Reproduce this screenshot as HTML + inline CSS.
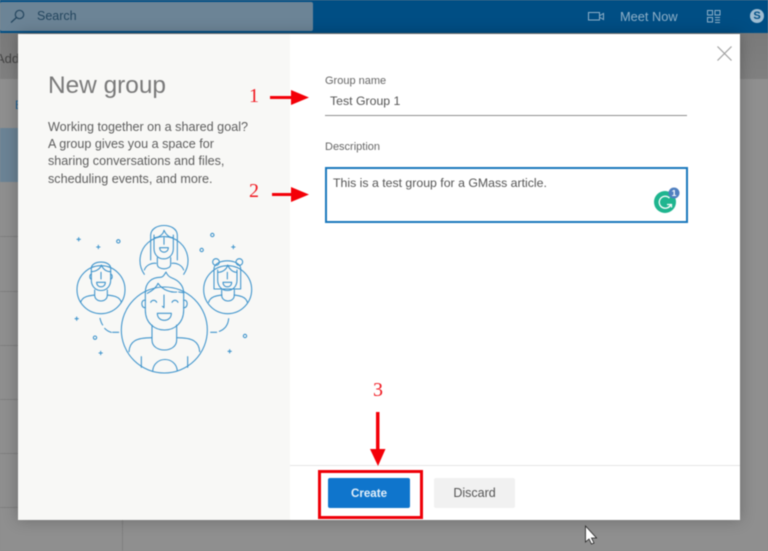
<!DOCTYPE html>
<html lang="en"><head><meta charset="utf-8"><title>New group</title>
<style>
html,body{margin:0;padding:0;width:768px;height:551px;overflow:hidden;background:#8e8e8e}
*{box-sizing:border-box}
body{position:relative;font-family:"Liberation Sans",sans-serif;color:#555}
#w{position:absolute;left:0;top:0;width:768px;height:551px;overflow:hidden;filter:blur(.4px)}
.a{position:absolute;white-space:nowrap}
</style></head><body><div id="w">
<!-- background -->
<div class="a" style="left:0;top:0;width:768px;height:33px;background:#004e84"></div>
<div class="a" style="left:0;top:33px;width:768px;height:46px;background:linear-gradient(#7a7a7a,#808080)"></div>
<div class="a" style="left:0;top:79px;width:768px;height:472px;background:#8f8f8f"></div>
<div class="a" style="left:0;top:128px;width:18px;height:54px;background:#6b8395"></div>
<div class="a" style="left:0;top:236px;width:18px;height:1px;background:#7f7f7f"></div>
<div class="a" style="left:0;top:291px;width:18px;height:1px;background:#7f7f7f"></div>
<div class="a" style="left:0;top:345px;width:18px;height:1px;background:#7f7f7f"></div>
<div class="a" style="left:0;top:399px;width:18px;height:1px;background:#7f7f7f"></div>
<div class="a" style="left:0;top:453px;width:18px;height:1px;background:#7f7f7f"></div>
<div class="a" style="left:0;top:507px;width:18px;height:1px;background:#7f7f7f"></div>
<div class="a" style="left:122px;top:520px;width:1px;height:31px;background:#7f7f7f"></div>
<div class="a" style="left:-4px;top:51px;font-size:13px;color:#444">Add</div>
<div class="a" style="left:15px;top:98px;font-size:12px;color:#1f5f8f">E</div>
<!-- search -->
<div class="a" style="left:0;top:2px;width:313px;height:29px;background:#6c8496;border-radius:2px"></div>
<div class="a" style="left:37px;top:9px;font-size:12.500px;color:#24465f">Search</div>
<svg class="a" style="left:8px;top:7px" width="20" height="20" viewBox="0 0 20 20" fill="none" stroke="#24465f" stroke-width="1.200"><circle cx="11.500" cy="7.500" r="4.200"/><path d="M8.500 10.500L3 15.500"/></svg>
<!-- right header -->
<svg class="a" style="left:587px;top:9px" width="20" height="14" viewBox="0 0 20 14" fill="none" stroke="#8fb0c8" stroke-width="1"><rect x="1.500" y="3.500" width="11" height="7.500"/><path d="M13 6.500l3.500-2v6l-3.500-2"/></svg>
<div class="a" style="left:620px;top:9px;font-size:12.800px;color:#8fb0c8">Meet Now</div>
<svg class="a" style="left:706px;top:9px" width="16" height="15" viewBox="0 0 16 15" fill="none" stroke="#8fb0c8" stroke-width="1"><rect x="1.500" y="1.500" width="5" height="4.500"/><rect x="9" y="1.500" width="5" height="4.500"/><rect x="1.500" y="8.500" width="5" height="4.500"/><path d="M9 8.500h5M9 11h5M9 13.500h5"/></svg>
<div class="a" style="left:750px;top:9px;width:14px;height:14px;border-radius:50%;background:#9fbdd2;color:#004e84;font-size:11px;font-weight:bold;line-height:14px;text-align:center">S</div>
<!-- modal shadow and modal -->
<div class="a" style="left:18px;top:34px;width:722px;height:486px;background:#fff;box-shadow:0 0 14px rgba(0,0,0,.25)"></div>
<div class="a" style="left:18px;top:34px;width:272px;height:486px;background:#f8f8f6"></div>
<div class="a" style="left:290px;top:465px;width:450px;height:1px;background:#e6e6e6"></div>
<!-- left text -->
<div class="a" style="left:48px;top:70px;font-size:24.400px;line-height:32px;color:#7a7a7a">New group</div>
<div class="a" style="left:48px;top:119px;font-size:12.600px;line-height:17.200px;color:#5e5e5e">Working together on a shared goal?<br>A group gives you a space for<br>sharing conversations and files,<br>scheduling events, and more.</div>
<!-- illustration -->
<svg class="a" style="left:60px;top:215px" width="200" height="165" viewBox="0 0 600 495" fill="none" stroke="#3f94cc" stroke-width="3.200" stroke-linecap="round" stroke-linejoin="round">
<circle cx="313" cy="345" r="129"/>
<path d="M207 410c2-30 20-42 68-42M419 410c-2-30-20-42-68-42M244 425v32M383 425v32M278 468c4-46 70-46 74 0"/>
<path d="M276 330v45c0 40 74 40 74 0v-45"/>
<path d="M256 232v53c0 80 115 80 115 0v-53"/>
<path d="M256 232c0-30 20-45 45-45c8 0 12-8 17-16c3 8 8 14 18 18c22 8 35 25 35 45"/>
<path d="M262 235c15-8 28-18 32-30c15 22 40 28 56 26M356 231l14 2"/>
<path d="M256 256c-14-4-14 24 0 22M371 256c14-4 14 24 0 22"/>
<path d="M272 262c4-8 14-8 18 0M336 262c4-8 14-8 18 0M312 240v38l-5-4"/>
<path d="M292 295h42c0 28-42 28-42 0z"/>
<circle cx="123" cy="224" r="72"/>
<path d="M62 262c5-18 25-20 42-22M184 262c-5-18-25-20-42-22M104 225v15c0 24 38 24 38 0v-15"/>
<path d="M94 160v35c0 42 58 42 58 0v-35c0-25-58-25-58 0z"/>
<path d="M94 170c15 0 28-10 30-20c5 12 15 20 28 20M123 172v20M110 202h26c0 18-26 18-26 0zM94 178c-6 0-6 14 0 14M152 178c6 0 6 14 0 14"/>
<path d="M253 178a72 72 0 1 1 118 0"/>
<path d="M253 165c5-15 22-22 35-20M371 165c-5-15-22-22-35-20"/>
<path d="M292 128v20c0 18 40 18 40 0v-20"/>
<path d="M272 135V60c2-38 78-38 80 0v75"/>
<path d="M282 60v40c0 42 58 42 58 0V60M282 68c15 0 28-10 30-22c5 12 15 22 28 22M312 68v20M299 98h26c0 18-26 18-26 0z"/>
<circle cx="503" cy="224" r="72"/>
<path d="M446 262c5-18 25-20 40-22M562 262c-5-18-25-20-40-22M485 225v15c0 24 38 24 38 0v-15"/>
<path d="M462 160v62h80v-62c-4-30-76-30-80 0z"/>
<path d="M473 165v30c0 42 58 42 58 0v-30M473 172c15 0 28-10 30-22c5 12 15 22 28 22M502 172v20M489 202h26c0 18-26 18-26 0z"/>
<circle cx="468" cy="141" r="10"/><circle cx="538" cy="141" r="10"/>
<path d="M120 310c2 8 4 14 8 20M134 340c6 6 12 10 20 12M158 352h18M452 352h18M478 349c16-6 26-18 28-38"/>
<path d="M56 68v10M51 73h10M115 91v10M110 96h10M520 91v10M515 96h10M50 306v10M45 311h10M122 409v10M117 414h10M509 404v10M504 409h10"/>
<circle cx="175" cy="79" r="5"/><circle cx="457" cy="60" r="5"/><circle cx="425" cy="105" r="5"/><circle cx="105" cy="368" r="5"/><circle cx="555" cy="363" r="5"/>
</svg>
<!-- close -->
<svg class="a" style="left:717px;top:46px" width="15" height="15" viewBox="0 0 15 15" fill="none" stroke="#a0a0a0" stroke-width="1.200"><path d="M.5.5l14 14M14.500.5l-14 14"/></svg>
<!-- form -->
<div class="a" style="left:325px;top:75px;font-size:11px;line-height:13px;color:#666">Group name</div>
<div class="a" style="left:330px;top:94px;font-size:12.300px;line-height:15px;color:#555">Test Group 1</div>
<div class="a" style="left:325px;top:115px;width:362px;height:1px;background:#8f8f8f"></div>
<div class="a" style="left:325px;top:141px;font-size:11px;line-height:13px;color:#666">Description</div>
<div class="a" style="left:325px;top:167px;width:363px;height:56px;border:2px solid #1a78bd"></div>
<div class="a" style="left:333px;top:176px;font-size:12.300px;line-height:15px;color:#555">This is a test group for a GMass article.</div>
<!-- grammarly -->
<svg class="a" style="left:652px;top:186px" width="28" height="28" viewBox="0 0 28 28" fill="none"><circle cx="13" cy="16" r="11" fill="#1fb58f"/><path d="M17.500 12a6 6 0 1 0 1.500 6" stroke="#fff" stroke-width="1.300"/><path d="M15 18.500h4.500v3" stroke="#fff" stroke-width="1.200"/><circle cx="22" cy="7" r="5.500" fill="#4f7fc0"/><text x="22" y="10" font-size="8.500" font-weight="bold" fill="#fff" text-anchor="middle" font-family="Liberation Sans">1</text></svg>
<!-- buttons -->
<div class="a" style="left:328px;top:478px;width:82px;height:30px;background:#0f75cc;border-radius:2px;color:#e4f0fa;font-size:11.600px;font-weight:bold;line-height:31px;text-align:center">Create</div>
<div class="a" style="left:434px;top:478px;width:81px;height:30px;background:#f1f1f1;border-radius:2px;color:#555;font-size:12.500px;line-height:30px;text-align:center">Discard</div>
<div class="a" style="left:318px;top:470px;width:105px;height:49px;border:3.500px solid #ee0008"></div>
<!-- annotations -->
<div class="a" style="left:249px;top:84px;font-family:'Liberation Serif',serif;font-size:20px;line-height:24px;color:#f01a22">1</div>
<div class="a" style="left:249px;top:179px;font-family:'Liberation Serif',serif;font-size:20px;line-height:24px;color:#f01a22">2</div>
<div class="a" style="left:373px;top:378px;font-family:'Liberation Serif',serif;font-size:20px;line-height:24px;color:#f01a22">3</div>
<svg class="a" style="left:0;top:0" width="768" height="551" fill="#f40008" stroke="none">
<path d="M270 96h21v-6l18 7.500l-18 7.500v-6h-21z"/>
<path d="M272 193h19v-6l18 7.500l-18 7.500v-6h-19z"/>
<path d="M376 412h3.500v37h6l-7.500 17l-8-17h6z"/>
<path d="M585.500 526v16l3.500-3l2.500 5l2.500-1l-2.500-5h5z" fill="#fff" stroke="#222" stroke-width=".8"/>
</svg>
</div></body></html>
